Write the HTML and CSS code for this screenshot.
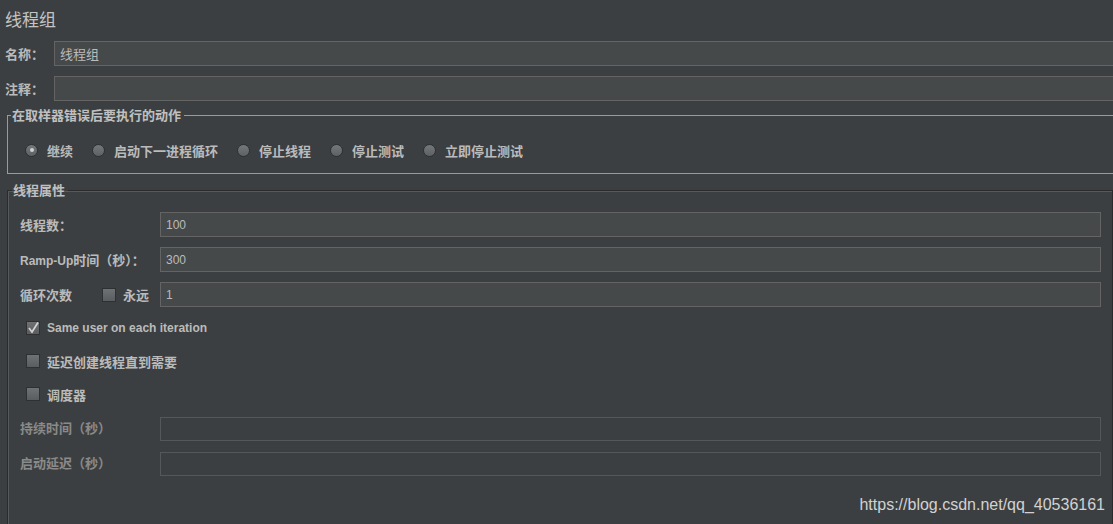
FILE: index.html
```html
<!DOCTYPE html>
<html lang="zh-CN">
<head>
    <meta charset="UTF-8">
    <title>线程组</title>
    <link rel="stylesheet" href="styles.css">
</head>
<body>
    <div class="editor">
        <!-- Header and name/comment fields -->
        <h1 class="title">线程组</h1>
        <div class="field-row">
            <label class="field-label">名称：</label>
            <input class="text-input" type="text" value="线程组">
        </div>
        <div class="field-row">
            <label class="field-label">注释：</label>
            <input class="text-input" type="text" value="">
        </div>

        <!-- Sampler error actions -->
        <fieldset class="group group-error">
            <legend class="group-title">在取样器错误后要执行的动作</legend>
            <div class="radio-row">
                <span class="radio-option"><span class="radio checked"></span>继续</span>
                <span class="radio-option"><span class="radio"></span>启动下一进程循环</span>
                <span class="radio-option"><span class="radio"></span>停止线程</span>
                <span class="radio-option"><span class="radio"></span>停止测试</span>
                <span class="radio-option"><span class="radio"></span>立即停止测试</span>
            </div>
        </fieldset>

        <!-- Thread properties -->
        <fieldset class="group group-thread">
            <legend class="group-title">线程属性</legend>
            <div class="input-list">
                <div class="prop-row">
                    <label class="prop-label">线程数：</label>
                    <input class="text-input" type="text" value="100">
                </div>
                <div class="prop-row">
                    <label class="prop-label"><span class="latin">Ramp-Up</span>时间（秒）：</label>
                    <input class="text-input" type="text" value="300">
                </div>
                <div class="prop-row">
                    <div class="prop-label loop-label">
                        <span>循环次数</span>
                        <span class="check-option"><span class="checkbox"></span>永远</span>
                    </div>
                    <input class="text-input" type="text" value="1">
                </div>
            </div>

            <div class="check-list">
                <div class="check-row">
                    <span class="checkbox">
                        <svg width="14" height="14" viewBox="0 0 14 14"><polyline points="3,7 6,11 12,1.5" fill="none" stroke="#d4d4d4" stroke-width="1.7"/></svg>
                    </span>
                    <span class="latin">Same user on each iteration</span>
                </div>
                <div class="check-row"><span class="checkbox"></span>延迟创建线程直到需要</div>
                <div class="check-row"><span class="checkbox"></span>调度器</div>
            </div>

            <div class="input-list disabled-list">
                <div class="prop-row small">
                    <label class="prop-label disabled">持续时间（秒）</label>
                    <input class="text-input disabled-input" type="text" disabled>
                </div>
                <div class="prop-row small">
                    <label class="prop-label disabled">启动延迟（秒）</label>
                    <input class="text-input disabled-input" type="text" disabled>
                </div>
            </div>
        </fieldset>

        <div class="watermark">https://blog.csdn.net/qq_40536161</div>
    </div>
</body>
</html>
```

FILE: styles.css
```css
/* Darcula-like editor panel */
body {
    margin: 0;
    background-color: #3c3f41;
    color: #bbbbbb;
    font-family: "Noto Sans CJK SC", sans-serif;
    font-size: 13px;
    overflow: hidden;
}

.editor {
    position: relative;
    width: 1113px;
    height: 524px;
    padding-left: 5px;
    box-sizing: border-box;
    overflow: hidden;
}

.title {
    margin: 0;
    height: 41px;
    line-height: 37px;
    font-size: 17px;
    font-weight: normal;
    color: #c4c4c4;
}

/* Name / comment rows */
.field-row {
    display: flex;
    align-items: center;
    height: 25px;
    margin-bottom: 10px;
    margin-right: -10px;
}

.field-label {
    width: 49px;
    flex: none;
    font-weight: bold;
}

.text-input {
    flex: 1;
    height: 25px;
    box-sizing: border-box;
    margin: 0;
    padding: 0 5px;
    background-color: #45494a;
    border: 1px solid #646464;
    color: #bbbbbb;
    font-family: "Liberation Sans", "Noto Sans CJK SC", sans-serif;
    font-size: 12px;
    outline: none;
}

.field-row .text-input {
    font-family: "Noto Sans CJK SC", sans-serif;
    font-size: 13px;
}

/* Titled borders */
.group {
    margin: 0 0 0 2px;
    padding: 0;
    min-width: 0;
}

.group-title {
    padding: 0 3px 0 1px;
    line-height: 14px;
    font-weight: bold;
    color: #c0c0c0;
}

.group-error {
    margin-top: -3px;
    margin-right: -20px;
    border: 1px solid #9a9a9a;
    padding: 20px 0 15px 17px;
}

.group-error .group-title {
    margin-left: -14px;
}

.group-thread {
    margin-top: 9px;
    height: 360px;
    border: 1px solid #2b2b2b;
    box-shadow: inset 1px 1px 0 #565a5c;
    padding: 15px 11px 0 12px;
}

.group-thread .group-title {
    margin-left: -8px;
}

/* Radio buttons */
.radio-row {
    display: flex;
    align-items: center;
    height: 16px;
    gap: 19px;
}

.radio-option {
    display: flex;
    align-items: center;
    gap: 9px;
    font-weight: bold;
}

.radio {
    position: relative;
    width: 13px;
    height: 13px;
    border-radius: 50%;
    box-sizing: border-box;
    background: linear-gradient(#74787a, #5e6163);
    border: 1px solid #2e3032;
}

.radio.checked::after {
    content: "";
    position: absolute;
    left: 3.5px;
    top: 3.5px;
    width: 4px;
    height: 4px;
    border-radius: 50%;
    background-color: #d0d0d0;
}

/* Property rows */
.input-list {
    display: flex;
    flex-direction: column;
    gap: 10px;
}

.prop-row {
    display: flex;
    align-items: center;
    height: 25px;
}

.prop-row.small,
.prop-row.small .text-input {
    height: 24px;
}

.disabled-list {
    margin-top: 13px;
    gap: 11px;
}

.prop-label {
    width: 140px;
    flex: none;
    font-weight: bold;
}

.prop-row.small .prop-label {
    margin-top: -3px;
}

.latin {
    font-family: "Liberation Sans", "Noto Sans CJK SC", sans-serif;
    font-size: 12px;
}

.loop-label {
    display: flex;
    align-items: center;
}

.loop-label > span:first-child {
    width: 82px;
}

.check-option {
    display: flex;
    align-items: center;
    gap: 7px;
}

.disabled {
    color: #8a8a8a;
}

.disabled-input {
    background-color: transparent;
    border-color: #555859;
}

/* Checkboxes */
.check-list {
    display: flex;
    flex-direction: column;
    gap: 13px;
    margin-top: 11px;
    padding-left: 6px;
}

.check-row {
    display: flex;
    align-items: center;
    gap: 7px;
    height: 20px;
    font-weight: bold;
}

.checkbox {
    display: inline-flex;
    width: 14px;
    height: 14px;
    box-sizing: border-box;
    background: linear-gradient(#6e7274, #5a5d5f);
    border: 1px solid #2e3032;
}

.checkbox svg {
    margin: -1px;
}

.watermark {
    position: absolute;
    right: 8px;
    bottom: 10px;
    font-family: "Liberation Sans", sans-serif;
    font-size: 16px;
    color: #d2d2d2;
}
```
